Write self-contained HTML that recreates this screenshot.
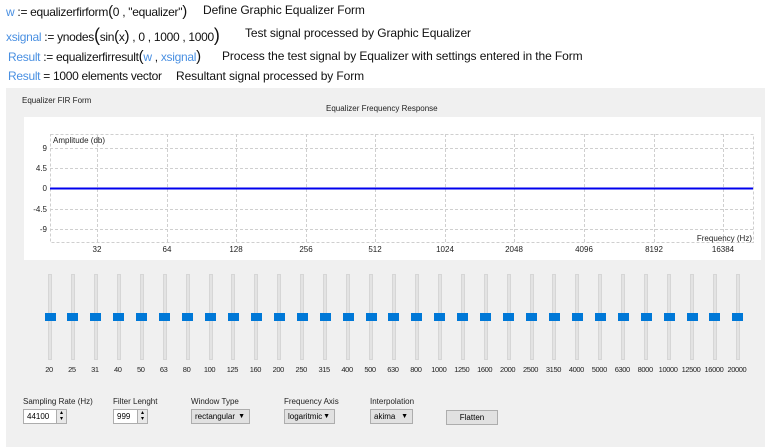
<!DOCTYPE html>
<html><head><meta charset="utf-8"><style>
*{margin:0;padding:0;box-sizing:border-box}
body{width:768px;height:447px;background:#fff;font-family:"Liberation Sans",sans-serif;position:relative;overflow:hidden}
.a{position:absolute;white-space:nowrap}
.m{font-size:12px;color:#111;letter-spacing:-0.3px}
.d{font-size:12px;color:#111;letter-spacing:-0.1px}
.b{color:#4a90e2}
.p{font-size:15px;font-weight:300}
.s{font-size:8px;color:#222}
.tr{position:absolute;top:274px;width:4px;height:86px;background:#e3e3e3;border:1px solid #d6d6d6}
.h{position:absolute;top:313px;width:11px;height:8px;background:#0078d7}
.lb{position:absolute;top:365px;font-size:7.5px;color:#222;width:30px;text-align:center;letter-spacing:-0.4px}
.box{position:absolute;top:409px;height:15px;border:1px solid #adadad;background:#e1e1e1;font-size:8px;line-height:13px;padding-left:3px}
</style></head><body>
<div class="a m" style="left:6px;top:3px"><span class="b">w</span> := equalizerfirform<span class="p">(</span>0 , "equalizer"<span class="p">)</span></div>
<div class="a d" style="left:203px;top:3px">Define Graphic Equalizer Form</div>
<div class="a m" style="left:6px;top:25px"><span class="b">xsignal</span> := ynodes<span class="p" style="font-size:18px">(</span>sin<span class="p">(</span>x<span class="p">)</span> , 0 , 1000 , 1000<span class="p" style="font-size:18px">)</span></div>
<div class="a d" style="left:245px;top:26px">Test signal processed by Graphic Equalizer</div>
<div class="a m" style="left:8px;top:48px"><span class="b">Result</span> := equalizerfirresult<span class="p">(</span><span class="b">w</span> , <span class="b">xsignal</span><span class="p">)</span></div>
<div class="a d" style="left:222px;top:49px">Process the test signal by Equalizer with settings entered in the Form</div>
<div class="a m" style="left:8px;top:69px"><span class="b">Result</span> = 1000 elements vector</div>
<div class="a d" style="left:176px;top:69px">Resultant signal processed by Form</div>

<div class="a" style="left:6px;top:88px;width:759px;height:359px;background:#f0f0f0"></div>
<div class="a s" style="left:22px;top:96px">Equalizer FIR Form</div>
<div class="a s" style="left:326px;top:104px">Equalizer Frequency Response</div>
<div class="a" style="left:24px;top:117px;width:737px;height:143px;background:#fff"></div>
<svg class="a" style="left:0;top:0" width="768" height="447">
<g stroke="#cfcfcf" stroke-dasharray="3,2" stroke-width="1" fill="none">
<rect x="50.5" y="134.5" width="703" height="108"/>
<line x1="50" y1="148.5" x2="753" y2="148.5"/><line x1="50" y1="168.5" x2="753" y2="168.5"/>
<line x1="50" y1="209.5" x2="753" y2="209.5"/><line x1="50" y1="229.5" x2="753" y2="229.5"/>
<line x1="97.5" y1="134" x2="97.5" y2="242"/><line x1="167.5" y1="134" x2="167.5" y2="242"/>
<line x1="236.5" y1="134" x2="236.5" y2="242"/><line x1="306.5" y1="134" x2="306.5" y2="242"/>
<line x1="375.5" y1="134" x2="375.5" y2="242"/><line x1="445.5" y1="134" x2="445.5" y2="242"/>
<line x1="514.5" y1="134" x2="514.5" y2="242"/><line x1="584.5" y1="134" x2="584.5" y2="242"/>
<line x1="654.5" y1="134" x2="654.5" y2="242"/><line x1="723.5" y1="134" x2="723.5" y2="242"/>
</g>
<line x1="50" y1="188.5" x2="753" y2="188.5" stroke="#0000ee" stroke-width="2"/>
<g font-family="Liberation Sans" font-size="8" fill="#222" text-anchor="end">
<text x="47" y="151">9</text><text x="47" y="171">4.5</text><text x="47" y="191">0</text><text x="47" y="212">-4.5</text><text x="47" y="232">-9</text>
</g>
<g font-family="Liberation Sans" font-size="8" fill="#222" text-anchor="middle">
<text x="97" y="252">32</text><text x="167" y="252">64</text><text x="236" y="252">128</text><text x="306" y="252">256</text><text x="375" y="252">512</text><text x="445" y="252">1024</text><text x="514" y="252">2048</text><text x="584" y="252">4096</text><text x="654" y="252">8192</text><text x="723" y="252">16384</text>
</g>
<text x="53" y="143" font-family="Liberation Sans" font-size="8" fill="#222">Amplitude (db)</text>
<text x="752" y="241" font-family="Liberation Sans" font-size="8" fill="#222" text-anchor="end">Frequency (Hz)</text>
</svg>
<div id="sl"></div>
<script>
var f=[20,25,31,40,50,63,80,100,125,160,200,250,315,400,500,630,800,1000,1250,1600,2000,2500,3150,4000,5000,6300,8000,10000,12500,16000,20000],h='';
for(var i=0;i<f.length;i++){var x=50+i*22.93;h+='<div class="tr" style="left:'+(x-2)+'px"></div><div class="h" style="left:'+(x-5.5)+'px"></div><div class="lb" style="left:'+(x-16)+'px">'+f[i]+'</div>';}
document.getElementById('sl').innerHTML=h;
</script>
<div class="a s" style="left:23px;top:397px">Sampling Rate (Hz)</div>
<div class="a s" style="left:113px;top:397px">Filter Lenght</div>
<div class="a s" style="left:191px;top:397px">Window Type</div>
<div class="a s" style="left:284px;top:397px">Frequency Axis</div>
<div class="a s" style="left:370px;top:397px">Interpolation</div>
<div class="box" style="left:23px;width:44px;background:#fff">44100<span style="position:absolute;right:0;top:0;width:10px;height:13px;background:#e8e8e8;border-left:1px solid #adadad;font-size:6px;line-height:6px;text-align:center">▴<br>▾</span></div>
<div class="box" style="left:113px;width:35px;background:#fff">999<span style="position:absolute;right:0;top:0;width:10px;height:13px;background:#e8e8e8;border-left:1px solid #adadad;font-size:6px;line-height:6px;text-align:center">▴<br>▾</span></div>
<div class="box" style="left:191px;width:59px">rectangular<span style="position:absolute;right:4px;font-size:7px">▼</span></div>
<div class="box" style="left:284px;width:51px">logaritmic<span style="position:absolute;right:4px;font-size:7px">▼</span></div>
<div class="box" style="left:370px;width:43px">akima<span style="position:absolute;right:4px;font-size:7px">▼</span></div>
<div class="box" style="left:446px;top:410px;width:52px;text-align:center;padding:0">Flatten</div>
</body></html>
